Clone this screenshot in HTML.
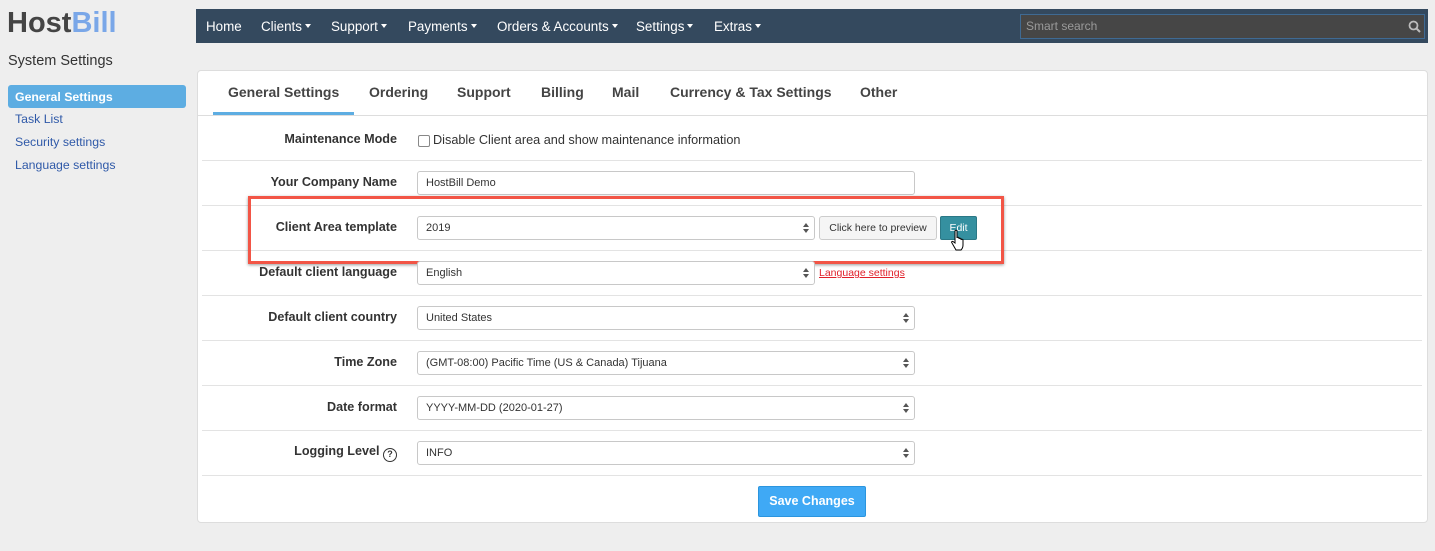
<!DOCTYPE html>
<html><head><meta charset="utf-8"><style>
*{box-sizing:border-box;margin:0;padding:0}
body{width:1435px;height:551px;background:#eeeeee;font-family:"Liberation Sans",Arial,sans-serif;position:relative;overflow:hidden;color:#333}
.a{position:absolute}
.logo{left:7px;top:7px;font-size:29px;font-weight:bold;color:#444}
.logo span{color:#7aa7e8}
.nav{left:196px;top:9px;width:1232px;height:34px;background:#34495e}
.nav .it{position:absolute;top:10px;color:#fff;font-size:13.4px}
.car{display:inline-block;border-left:3.5px solid transparent;border-right:3.5px solid transparent;border-top:4px solid #fff;vertical-align:3px;margin-left:3px}
.search{left:1020px;top:14px;width:405px;height:25px;background:#464646;border:1px solid #3f6a93;color:#9a9a9a;font-size:12px;padding:4px 5px}
.side{font-size:12.3px;color:#2f59a8}
.panel{left:197px;top:70px;width:1231px;height:453px;background:#fff;border:1px solid #ddd;border-radius:4px}
.tab{position:absolute;top:84px;font-size:14px;font-weight:bold;color:#444}
.line{position:absolute;left:202px;width:1220px;height:1px;background:#e3e3e3}
.lbl{position:absolute;right:1038px;font-size:12.6px;font-weight:bold;color:#333;text-align:right;white-space:nowrap}
.inp{position:absolute;left:417px;width:498px;height:24px;border:1px solid #c8c8c8;border-radius:3px;font-size:11px;padding:5px 8px;color:#333;background:#fff;white-space:nowrap}
.sel:after{content:"";position:absolute;right:5px;top:6px;width:0;height:0;border-left:3px solid transparent;border-right:3px solid transparent;border-bottom:4px solid #555}
.sel:before{content:"";position:absolute;right:5px;top:12px;width:0;height:0;border-left:3px solid transparent;border-right:3px solid transparent;border-top:4px solid #555}
</style></head><body>
<div class="a logo">Host<span>Bill</span></div>
<div class="a" style="left:8px;top:53px;font-size:14.5px;color:#333">System Settings</div>
<div class="a" style="left:8px;top:85px;width:178px;height:23px;background:#5dade2;border-radius:3px;color:#fff;font-weight:bold;font-size:12.3px;padding:5px 7px">General Settings</div>
<div class="a side" style="left:15px;top:112px">Task List</div>
<div class="a side" style="left:15px;top:135px">Security settings</div>
<div class="a side" style="left:15px;top:158px">Language settings</div>

<div class="a nav">
<span class="it" style="left:10px">Home</span>
<span class="it" style="left:65px">Clients<i class="car"></i></span>
<span class="it" style="left:135px">Support<i class="car"></i></span>
<span class="it" style="left:212px">Payments<i class="car"></i></span>
<span class="it" style="left:301px">Orders &amp; Accounts<i class="car"></i></span>
<span class="it" style="left:440px">Settings<i class="car"></i></span>
<span class="it" style="left:518px">Extras<i class="car"></i></span>
</div>
<div class="a search">Smart search
<svg style="position:absolute;right:3px;top:5px" width="13" height="13" viewBox="0 0 13 13"><circle cx="5.5" cy="5.5" r="4" fill="none" stroke="#bbb" stroke-width="1.8"/><path d="M8.5 8.5L12 12" stroke="#bbb" stroke-width="2"/></svg></div>

<div class="a panel"></div>
<div class="tab" style="left:228px">General Settings</div>
<div class="tab" style="left:369px">Ordering</div>
<div class="tab" style="left:457px">Support</div>
<div class="tab" style="left:541px">Billing</div>
<div class="tab" style="left:612px">Mail</div>
<div class="tab" style="left:670px">Currency &amp; Tax Settings</div>
<div class="tab" style="left:860px">Other</div>
<div class="line" style="top:115px;left:198px;width:1229px;background:#ddd"></div>
<div class="a" style="left:213px;top:112px;width:141px;height:3px;background:#5dade2"></div>

<div class="line" style="top:160px"></div>
<div class="line" style="top:205px"></div>
<div class="line" style="top:250px"></div>
<div class="line" style="top:295px"></div>
<div class="line" style="top:340px"></div>
<div class="line" style="top:385px"></div>
<div class="line" style="top:430px"></div>
<div class="line" style="top:475px"></div>

<div class="lbl" style="top:132px">Maintenance Mode</div>
<div class="a" style="left:418px;top:135px;width:12px;height:12px;border:1px solid #888;border-radius:2px;background:#fff"></div>
<div class="a" style="left:433px;top:133px;font-size:12.7px;color:#333">Disable Client area and show maintenance information</div>

<div class="lbl" style="top:175px">Your Company Name</div>
<div class="inp" style="top:171px">HostBill Demo</div>

<div class="lbl" style="top:220px">Client Area template</div>
<div class="inp sel" style="top:216px;width:398px">2019</div>
<div class="a" style="left:819px;top:216px;width:118px;height:24px;border:1px solid #ccc;border-radius:3px;background:#f5f5f5;font-size:10.5px;padding:5px 0;text-align:center;color:#333;white-space:nowrap">Click here to preview</div>
<div class="a" style="left:940px;top:216px;width:37px;height:24px;border:1px solid #2b7886;border-radius:2px;background:#3590a0;font-size:10.5px;padding:5px 0;text-align:center;color:#fff">Edit</div>
<svg class="a" style="left:950px;top:229px" width="16" height="22" viewBox="0 0 16 22"><path d="M5 2c0-1 2-1 2 0v7c0-1 2-1 2 0v1c0-1 2-1 2 0v1c0-1 2-1 2 0v5c0 2-1 4-2 5H6L2 14c-1-1 0-2 1-1.5L5 14Z" fill="#fff" stroke="#000" stroke-width="1"/></svg>
<div class="a" style="left:248px;top:196px;width:756px;height:68px;border:3px solid #f25546;box-shadow:0 1px 3px rgba(0,0,0,.4)"></div>

<div class="lbl" style="top:265px">Default client language</div>
<div class="inp sel" style="top:261px;width:398px">English</div>
<div class="a" style="left:819px;top:267px;font-size:10.5px;color:#e0202a;text-decoration:underline">Language settings</div>

<div class="lbl" style="top:310px">Default client country</div>
<div class="inp sel" style="top:306px">United States</div>

<div class="lbl" style="top:355px">Time Zone</div>
<div class="inp sel" style="top:351px">(GMT-08:00) Pacific Time (US &amp; Canada) Tijuana</div>

<div class="lbl" style="top:400px">Date format</div>
<div class="inp sel" style="top:396px">YYYY-MM-DD (2020-01-27)</div>

<div class="lbl" style="top:444px;right:1038px">Logging Level <span style="display:inline-block;width:14px;height:14px;border:1.5px solid #333;border-radius:50%;font-size:9px;text-align:center;line-height:11px;vertical-align:-2px">?</span></div>
<div class="inp sel" style="top:441px">INFO</div>

<div class="a" style="left:758px;top:486px;width:108px;height:31px;background:#3fa9f5;border:1px solid #2b95de;border-radius:2px;color:#fff;font-weight:bold;font-size:12.5px;text-align:center;line-height:29px">Save Changes</div>
</body></html>
